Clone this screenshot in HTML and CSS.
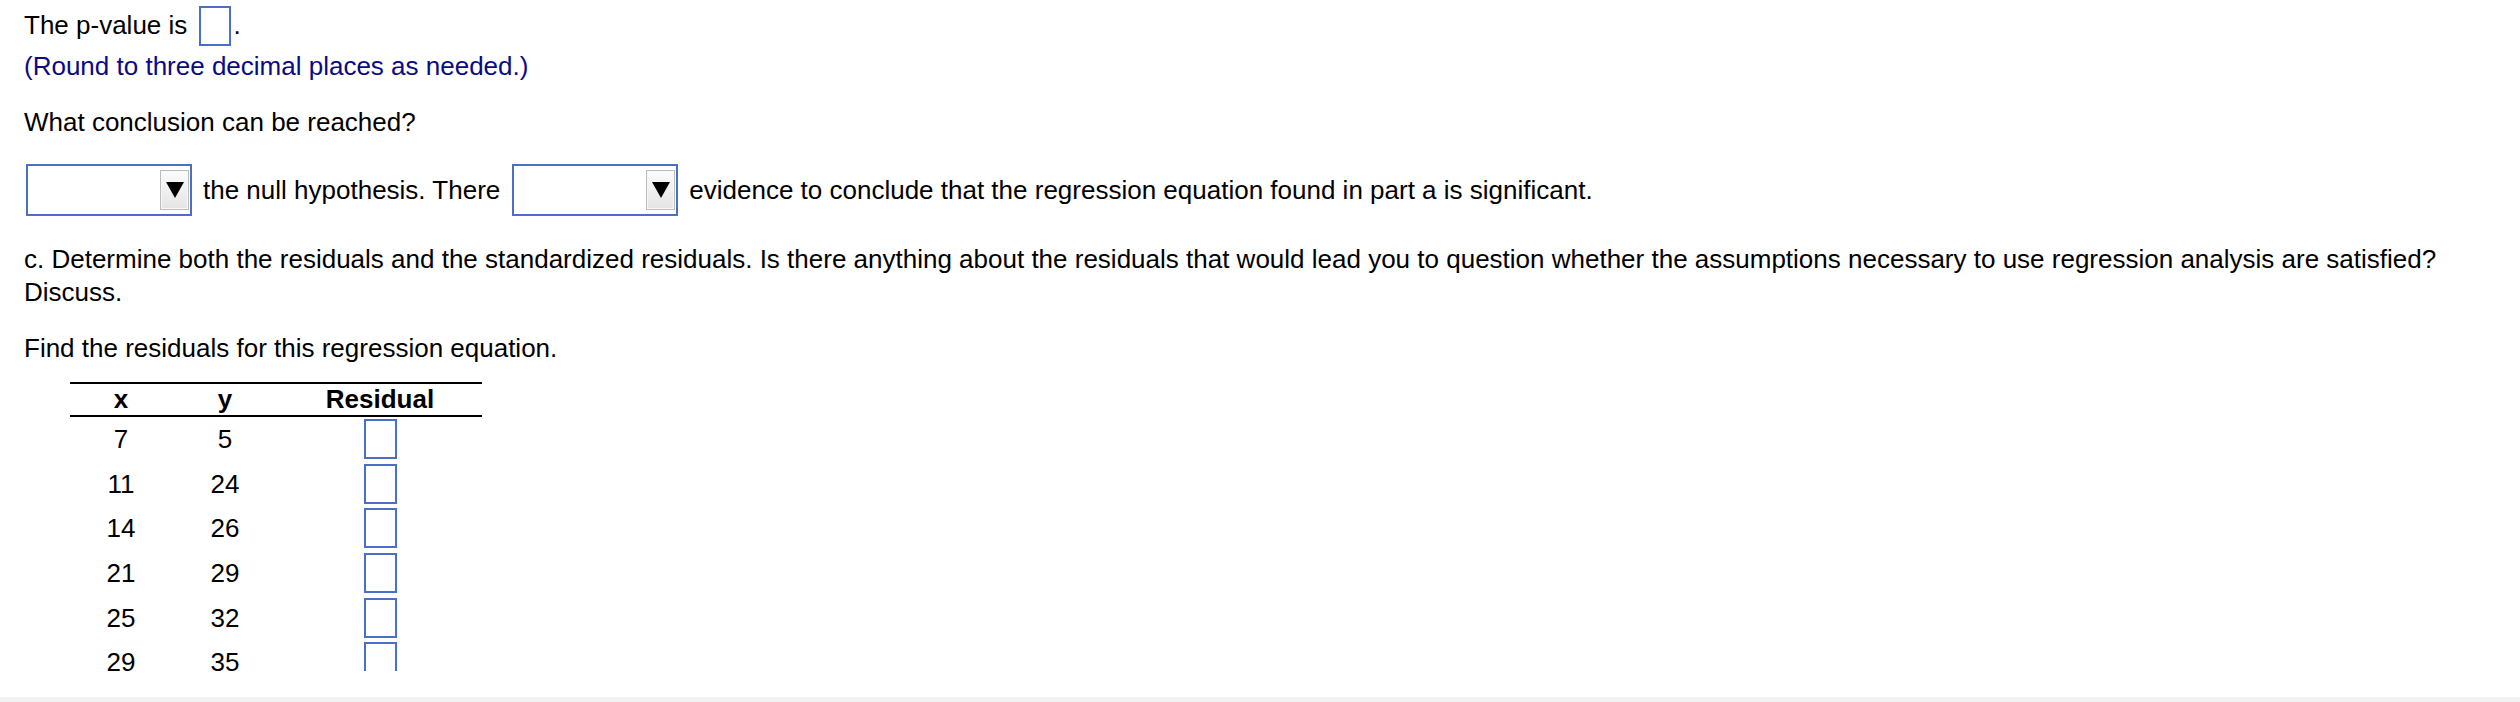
FILE: index.html
```html
<!DOCTYPE html>
<html lang="en">
<head>
<meta charset="utf-8">
<title>Regression question</title>
<link rel="stylesheet" href="styles.css">
</head>
<body>
<div class="viewport">
  <div class="page">
    <div class="line1">The p-value is <span class="ansbox"></span>.</div>
    <div class="hint">(Round to three decimal places as needed.)</div>
    <div class="question">What conclusion can be reached?</div>
    <div class="ddrow">
      <span class="dropdown"><span class="ddbtn"><svg width="20" height="18" viewBox="0 0 20 18"><polygon points="1,1 19,1 10,17" fill="#000"/></svg></span></span>
      <span class="ddtext">the null hypothesis. There</span>
      <span class="dropdown"><span class="ddbtn"><svg width="20" height="18" viewBox="0 0 20 18"><polygon points="1,1 19,1 10,17" fill="#000"/></svg></span></span>
      <span class="ddtext">evidence to conclude that the regression equation found in part a is significant.</span>
    </div>
    <p class="partc">c. Determine both the residuals and the standardized residuals. Is there anything about the residuals that would lead you to question whether the assumptions necessary to use regression analysis are satisfied? Discuss.</p>
    <p class="find">Find the residuals for this regression equation.</p>
    <div class="table">
      <div class="thead">
        <span>x</span><span>y</span><span>Residual</span>
      </div>
      <div class="row"><span>7</span><span>5</span><span class="cell"><span class="ansbox"></span></span></div>
      <div class="row"><span>11</span><span>24</span><span class="cell"><span class="ansbox"></span></span></div>
      <div class="row"><span>14</span><span>26</span><span class="cell"><span class="ansbox"></span></span></div>
      <div class="row"><span>21</span><span>29</span><span class="cell"><span class="ansbox"></span></span></div>
      <div class="row"><span>25</span><span>32</span><span class="cell"><span class="ansbox"></span></span></div>
      <div class="row"><span>29</span><span>35</span><span class="cell"><span class="ansbox"></span></span></div>
    </div>
  </div>
</div>
<div class="spacer"></div>
<div class="footer"></div>
</body>
</html>
```
FILE: styles.css
```css
html, body {
  margin: 0;
  padding: 0;
  background: #fff;
}
body {
  font-family: "Liberation Sans", Arial, sans-serif;
  font-size: 26px;
  color: #000;
  height: 702px;
  overflow: hidden;
  display: flex;
  flex-direction: column;
}
.viewport {
  height: 671px;
  overflow: hidden;
  flex: none;
}
.spacer {
  height: 26px;
  flex: none;
}
.footer {
  flex: 1;
  background: #f2f2f2;
}
.page {
  padding-left: 24px;
  line-height: 35px;
}
.line1 {
  margin-top: 6px;
}
.ansbox {
  display: inline-block;
  box-sizing: border-box;
  width: 32px;
  height: 40px;
  border: 2px solid #4a6fc6;
  background: #fff;
  vertical-align: -12px;
  margin: 0 3px 0 4px;
}
.hint {
  color: #0a0a84;
  margin-top: 3px;
}
.question {
  margin-top: 21px;
}
.ddrow {
  margin-top: 24px;
  display: flex;
  align-items: center;
  height: 52px;
}
.dropdown {
  box-sizing: border-box;
  width: 166px;
  height: 52px;
  border: 2px solid #4a6fc6;
  background: #fff;
  display: flex;
  align-items: center;
  justify-content: flex-end;
  padding-right: 1px;
  margin-left: 2px;
  flex: none;
}
.ddrow .dropdown + .ddtext {
  margin-left: 11px;
}
.ddtext + .dropdown {
  margin-left: 12px;
}
.ddbtn {
  box-sizing: border-box;
  width: 29px;
  height: 40px;
  border: 1px solid #bcbcbc;
  box-shadow: inset 0 0 0 1px #f8f8f8;
  background: linear-gradient(#fcfcfc, #e4e4e4);
  display: flex;
  align-items: center;
  justify-content: center;
}
.ddbtn svg {
  display: block;
}
.partc {
  margin: 27px 0 0 0;
  line-height: 33px;
}
.find {
  margin: 22px 0 0 0;
}
.table {
  margin-top: 16px;
  margin-left: 46px;
  width: 412px;
}
.thead {
  display: grid;
  grid-template-columns: 102px 106px 204px;
  border-top: 2px solid #000;
  border-bottom: 2px solid #000;
  height: 31px;
  line-height: 30px;
  font-weight: bold;
  text-align: center;
}
.row {
  display: grid;
  grid-template-columns: 102px 106px 204px;
  height: 44.6px;
  align-items: center;
  text-align: center;
  line-height: 30px;
}
.cell {
  display: flex;
  justify-content: center;
  align-items: center;
}
.row .ansbox {
  width: 33px;
  margin: 0;
  vertical-align: middle;
}
```
